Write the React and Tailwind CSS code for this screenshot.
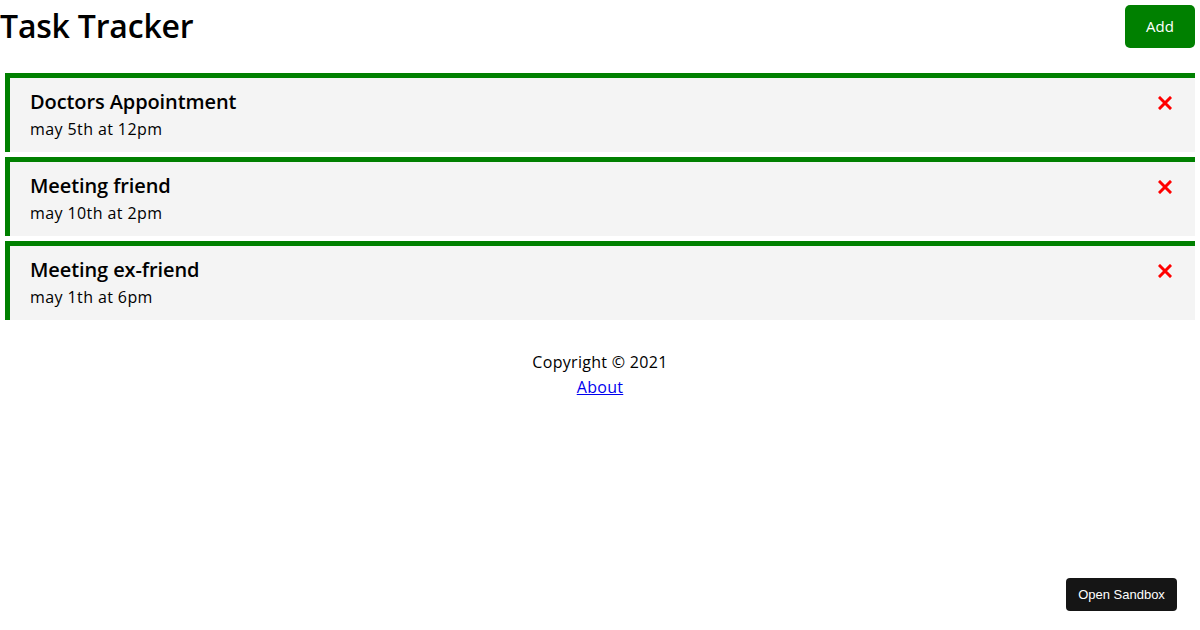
import React from 'react';

const tasks = [
    { id: 1, text: 'Doctors Appointment', day: 'may 5th at 12pm' },
    { id: 2, text: 'Meeting friend', day: 'may 10th at 2pm' },
    { id: 3, text: 'Meeting ex-friend', day: 'may 1th at 6pm' },
];

const CloseIcon = () => (
    <svg width="14" height="14" viewBox="0 0 14 14" className="mt-[9px]">
        <path d="M2 2 L12 12 M12 2 L2 12" stroke="#ff0000" strokeWidth="3" strokeLinecap="square" />
    </svg>
);

export default function App() {
    return (
        <div className="min-h-[630px] bg-white text-black relative" style={{ fontFamily: '"Open Sans", "Liberation Sans", sans-serif' }}>
            <header className="flex justify-between items-start h-[68px]">
                <h1 className="text-[32px] leading-[52px] font-semibold tracking-[-0.2px]">Task Tracker</h1>
                <button className="mt-[5px] mr-[5px] w-[70px] h-[43px] bg-[#008000] text-white text-[15px] rounded-[5px]">Add</button>
            </header>
            {tasks.map(t => (
                <div key={t.id} className="m-[5px] h-[79px] bg-[#f4f4f4] border-l-[5px] border-t-[5px] border-[#008000] pl-[20px] pr-[23px] pt-[9px] flex justify-between items-start">
                    <div>
                        <h3 className="text-[20px] leading-[30px] font-semibold tracking-[-0.1px]">{t.text}</h3>
                        <p className="text-[16px] leading-[24px] tracking-[0.4px]">{t.day}</p>
                    </div>
                    <CloseIcon />
                </div>
            ))}
            <footer className="mt-[30px] text-center text-[16px] leading-[25px] tracking-[0.3px]">
                <p>Copyright © 2021</p>
                <a href="#" className="text-[#0000ee] underline">About</a>
            </footer>
            <button className="absolute right-[23px] top-[578px] w-[111px] h-[33px] bg-[#151515] text-white text-[13px] rounded-[4px]" style={{ fontFamily: '"Liberation Sans", Arial, sans-serif' }}>Open Sandbox</button>
        </div>
    );
}
